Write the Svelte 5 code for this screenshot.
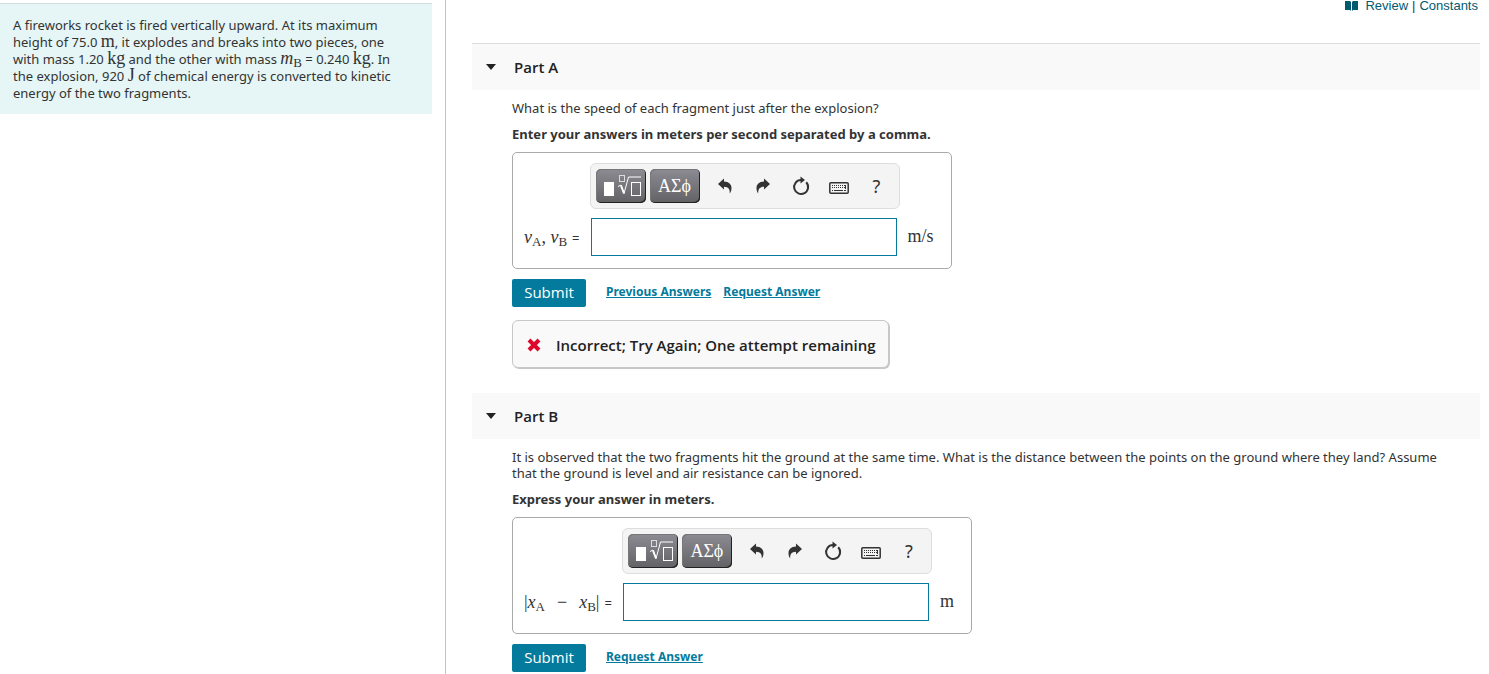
<script lang="ts">
    interface Part {
        id: string;
        title: string;
        question: string;
        instruction: string;
        unit: string;
        links: string[];
        feedback?: string;
    }

    const parts: Part[] = [
        {
            id: "a",
            title: "Part A",
            question: "What is the speed of each fragment just after the explosion?",
            instruction: "Enter your answers in meters per second separated by a comma.",
            unit: "m/s",
            links: ["Previous Answers", "Request Answer"],
            feedback: "Incorrect; Try Again; One attempt remaining",
        },
        {
            id: "b",
            title: "Part B",
            question:
                "It is observed that the two fragments hit the ground at the same time. What is the distance between the points on the ground where they land? Assume that the ground is level and air resistance can be ignored.",
            instruction: "Express your answer in meters.",
            unit: "m",
            links: ["Request Answer"],
        },
    ];

    let closed: Record<string, boolean> = $state({});
    let answers: Record<string, string> = $state({ a: "", b: "" });
</script>

{#snippet toolbar()}
    <div class="toolbar" role="toolbar" aria-label="Equation tools">
        <button type="button" class="dark" aria-label="Templates">
            <svg width="50" height="34" viewBox="0 0 50 34" fill="none" stroke="#fff">
                <rect x="8" y="13" width="10" height="14" fill="#fff" stroke="none" />
                <rect x="23.5" y="6.5" width="5" height="6" stroke="#ddd" />
                <path d="M22 17.5l3-1.5 3 8.5 4.5-16.5H45" />
                <path d="M25 16.5l3 8" stroke-width="2" />
                <rect x="35.5" y="13.5" width="9" height="13" />
            </svg>
        </button>
        <button type="button" class="dark" aria-label="Symbols">ΑΣϕ</button>
        <div class="tools">
            <button type="button" aria-label="Undo">
                <svg width="20" height="20" viewBox="0 0 20 20" fill="#333">
                    <path d="M3 8L9 2.5V5.5C14 5.7 16.5 8.5 16.5 12 16.5 14 16 16 14.8 17.5 15 13 13.5 10.8 9 10.7V13.5Z" />
                </svg>
            </button>
            <button type="button" aria-label="Redo">
                <svg width="20" height="20" viewBox="0 0 20 20" fill="#333">
                    <path d="M17 8L11 2.5V5.5C6 5.7 3.5 8.5 3.5 12 3.5 14 4 16 5.2 17.5 5 13 6.5 10.8 11 10.7V13.5Z" />
                </svg>
            </button>
            <button type="button" aria-label="Reset">
                <svg width="20" height="20" viewBox="0 0 20 20" fill="none" stroke="#333" stroke-width="2">
                    <path d="M15.2 6.2A7 7 0 1 1 10 4" />
                    <path d="M9.5 0.5L14 4 9.5 7.5Z" fill="#333" stroke="none" />
                </svg>
            </button>
            <button type="button" aria-label="Keyboard">
                <svg width="20" height="20" viewBox="0 0 20 20" fill="none" stroke="#333">
                    <rect x="0.8" y="6.8" width="18.4" height="10.4" rx="1" stroke-width="1.5" />
                    <path d="M3 9.5h14M3 11.5h14" stroke-dasharray="1 1" />
                    <path d="M3 14.5h1M5 14.5h9M15 14.5h2M16.5 9v4" />
                </svg>
            </button>
            <button type="button" class="help" aria-label="Help">?</button>
        </div>
    </div>
{/snippet}

<div class="page">
    <aside>
        <p class="problem">
            A fireworks rocket is fired vertically upward. At its maximum height of 75.0 <span class="tex">m</span>, it
            explodes and breaks into two pieces, one with mass 1.20 <span class="tex">kg</span> and the other with mass
            <span class="tex"><i>m</i><sub>B</sub></span> = 0.240 <span class="tex">kg</span>. In the explosion, 920
            <span class="tex">J</span> of chemical energy is converted to kinetic energy of the two fragments.
        </p>
    </aside>

    <main>
        <nav>
            <svg width="13" height="10" viewBox="0 0 13 10" fill="#005a70">
                <path d="M0 0h5l1 1v9L5 9H0zM13 0H8L7 1v9l1-1h5z" />
            </svg>
            <a href="#review">Review</a>
            <span>|</span>
            <a href="#constants">Constants</a>
        </nav>

        {#each parts as part (part.id)}
            <section>
                <h2>
                    <button
                        type="button"
                        aria-expanded={!closed[part.id]}
                        onclick={() => (closed[part.id] = !closed[part.id])}
                    >
                        <svg width="10" height="6" viewBox="0 0 10 6" fill="#222">
                            <path d="M0 0h10L5 6z" />
                        </svg>
                        {part.title}
                    </button>
                </h2>
                {#if !closed[part.id]}
                    <div class="content">
                        <p>{part.question}</p>
                        <p class="instruction">{part.instruction}</p>
                        <div class="answer">
                            {@render toolbar()}
                            <label for="answer-{part.id}">
                                {#if part.id === "a"}
                                    <span class="tex"><i>v</i><sub>A</sub>, <i>v</i><sub>B</sub></span>
                                {:else}
                                    <span class="tex"
                                        >|<i>x</i><sub>A</sub><span class="minus">−</span><i>x</i><sub>B</sub>|</span
                                    >
                                {/if}
                                <span>=</span>
                            </label>
                            <input id="answer-{part.id}" type="text" bind:value={answers[part.id]} />
                            <span class="tex unit">{part.unit}</span>
                        </div>
                        <div class="actions">
                            <button type="button">Submit</button>
                            {#each part.links as link}
                                <a href="#{part.id}">{link}</a>
                            {/each}
                        </div>
                        {#if part.feedback}
                            <div class="feedback">
                                <svg width="14" height="14" viewBox="0 0 14 14" stroke="#e0052a" stroke-width="4">
                                    <path d="M2 2l10 10M12 2L2 12" />
                                </svg>
                                {part.feedback}
                            </div>
                        {/if}
                    </div>
                {/if}
            </section>
        {/each}
    </main>
</div>

<style>
    :global(body) {
        background: #fff;
    }

    .page {
        display: flex;
        min-height: 100vh;
        font-family: "Noto Sans", sans-serif;
        font-size: 13px;
        line-height: 16px;
        color: #333;
    }

    aside {
        box-sizing: border-box;
        flex: 0 0 446px;
        padding: 3px 13px 0 0;
        border-right: 1px solid #b9c4cf;
    }

    p {
        margin: 0;
    }

    .problem {
        padding: 13px 26px 12px 13px;
        border-top: 1px solid #d3dde0;
        background: #e6f6f6;
        line-height: 17px;
    }

    .tex {
        font-family: "Liberation Serif", serif;
        font-size: 18px;
        line-height: 14px;
    }

    sub {
        font-size: 13px;
        line-height: 10px;
        vertical-align: -3px;
    }

    main {
        flex: 1;
        min-width: 0;
        padding: 0 9px 0 26px;
    }

    nav {
        display: flex;
        justify-content: flex-end;
        align-items: center;
        gap: 4px;
        height: 12px;
        margin-bottom: 31px;
        padding-right: 2px;
        font-family: "Liberation Sans", sans-serif;
    }

    nav svg {
        margin-right: 3px;
    }

    nav a {
        color: #005a70;
        text-decoration: none;
    }

    section + section {
        margin-top: 25px;
    }

    h2 {
        margin: 0;
        background: #f9f9f9;
    }

    section:first-of-type h2 {
        border-top: 1px solid #ddd;
    }

    button {
        padding: 0;
        border: 0;
        background: none;
        color: inherit;
        font: inherit;
        cursor: pointer;
    }

    h2 button {
        display: flex;
        align-items: center;
        gap: 18px;
        width: 100%;
        height: 46px;
        padding: 0 14px;
        color: #222;
        font-family: "Open Sans", sans-serif;
        font-size: 15px;
        font-weight: 600;
    }

    .content {
        padding: 10px 20px 0 40px;
    }

    .instruction {
        margin: 10px 0;
        font-weight: 700;
    }

    .answer {
        display: grid;
        grid-template-columns: auto 310px auto;
        align-items: center;
        row-gap: 9px;
        width: max-content;
        padding: 10px 17px 12px 11px;
        border: 1px solid #a9a9a9;
        border-radius: 5px;
    }

    .toolbar {
        display: flex;
        box-sizing: border-box;
        grid-column: 2;
        gap: 4px;
        height: 46px;
        padding: 5px;
        border: 1px solid #ddd;
        border-radius: 6px;
        background: #f4f4f4;
    }

    .dark {
        box-sizing: border-box;
        flex: none;
        width: 50px;
        height: 34px;
        border-radius: 5px;
        background: linear-gradient(#8d8b93, #626265);
        box-shadow:
            inset -1px -1px #222,
            inset 1px 1px #777;
        color: #fff;
        font-family: "Liberation Serif", serif;
        font-size: 18px;
    }

    .dark svg {
        display: block;
    }

    .tools {
        display: flex;
        margin-left: 2px;
    }

    .tools button {
        display: grid;
        place-items: center;
        width: 38px;
        height: 34px;
    }

    .tools .help {
        font-size: 18px;
    }

    label {
        display: flex;
        align-items: center;
        gap: 5px;
        grid-column: 1;
        padding: 2px 10px 0 0;
    }

    .minus {
        margin: 0 12px;
    }

    input {
        box-sizing: border-box;
        height: 38px;
        margin: 0 3px 0 1px;
        padding: 0 8px;
        border: 1px solid #047a9c;
        outline: 0;
        font: inherit;
    }

    .unit {
        padding: 0 0 2px 8px;
    }

    .actions {
        display: flex;
        align-items: center;
        gap: 12px;
        margin-top: 10px;
    }

    .actions button {
        width: 74px;
        height: 28px;
        margin-right: 8px;
        padding-bottom: 2px;
        border-radius: 2px;
        background: #047a9c;
        color: #fff;
        font-family: "Open Sans", sans-serif;
        font-size: 15px;
    }

    .actions a {
        padding-bottom: 2px;
        color: #047a9c;
        font-size: 12px;
        font-weight: 700;
    }

    .feedback {
        display: flex;
        box-sizing: border-box;
        align-items: center;
        gap: 15px;
        width: max-content;
        height: 48px;
        margin-top: 13px;
        padding: 2px 12px 0 14px;
        border: 1px solid #c7c7c7;
        border-radius: 6px;
        background: #f9f9f9;
        box-shadow: 1px 1px #c7c7c7;
        color: #222;
        font-family: "Open Sans", sans-serif;
        font-size: 15px;
        font-weight: 600;
    }
</style>
